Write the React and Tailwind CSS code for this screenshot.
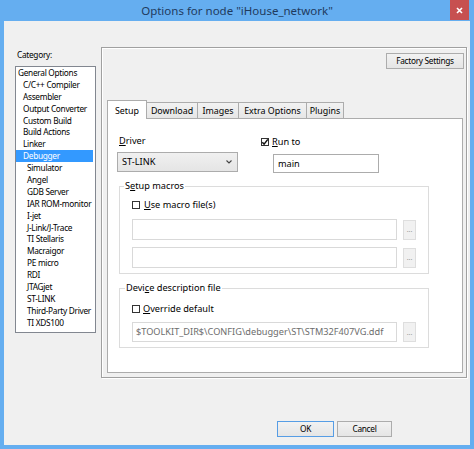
import React from "react";

function Check({ checked }) {
  return (
    <span className="relative flex h-[8px] w-[8px] shrink-0 items-center justify-center border border-[#333333] bg-white">
      {checked && (
        <svg width="8" height="8" viewBox="0 0 8 8" className="absolute left-[-1px] top-[-1px]">
          <path d="M1.3 4.2 L3.1 6.2 L6.8 1.4" stroke="#111" strokeWidth="1.5" fill="none" />
        </svg>
      )}
    </span>
  );
}

const items = [
  ["General Options", 0],
  ["C/C++ Compiler", 1],
  ["Assembler", 1],
  ["Output Converter", 1],
  ["Custom Build", 1],
  ["Build Actions", 1],
  ["Linker", 1],
  ["Debugger", 1, true],
  ["Simulator", 2],
  ["Angel", 2],
  ["GDB Server", 2],
  ["IAR ROM-monitor", 2],
  ["I-jet", 2],
  ["J-Link/J-Trace", 2],
  ["TI Stellaris", 2],
  ["Macraigor", 2],
  ["PE micro", 2],
  ["RDI", 2],
  ["JTAGjet", 2],
  ["ST-LINK", 2],
  ["Third-Party Driver", 2],
  ["TI XDS100", 2],
];

function Row({ label, level, selected }) {
  const pad = level === 0 ? "pl-[2px]" : level === 1 ? "pl-[7px]" : "pl-[11px]";
  return (
    <div
      className={
        "flex h-[11.9px] items-center whitespace-nowrap leading-[11.9px] " +
        pad +
        (selected ? " mr-[2px] bg-[#3399ff] text-white" : " text-black")
      }
    >
      {label}
    </div>
  );
}

function Dots() {
  return (
    <div className="flex h-[20px] w-[13px] items-center justify-center border border-[#dedede] bg-[#f1f1f1] text-[7px] leading-none text-[#9a9a9a]">
      ...
    </div>
  );
}

function Tab({ children, w, selected }) {
  return selected ? (
    <div className={"relative z-10 -mb-[1px] flex h-[19px] items-start justify-center border border-b-0 border-[#acacac] bg-white pt-[3px] " + w}>
      {children}
    </div>
  ) : (
    <div className={"-ml-[1px] flex h-[16px] items-center justify-center border border-b-0 border-[#acacac] bg-[#f0f0f0] bg-gradient-to-b from-[#f2f2f2] to-[#e6e6e6] " + w}>
      {children}
    </div>
  );
}

export default function App() {
  return (
    <div className="flex h-[449px] w-[474px] flex-col bg-[#65aef0] font-['Noto_Sans',sans-serif] text-[8.3px] tracking-[-0.3px] text-black">
      {/* title bar */}
      <div className="relative flex h-[21px] shrink-0 items-center justify-center">
        <span className="text-[11.5px] tracking-normal text-[#1f3b5e]">Options for node "iHouse_network"</span>
        <div className="absolute right-[5px] top-0 flex h-[20px] w-[19px] items-center justify-center bg-[#c75050]">
          <svg width="7" height="7" viewBox="0 0 7 7">
            <path d="M1 1 L6 6 M6 1 L1 6" stroke="#fff" strokeWidth="1.6" />
          </svg>
        </div>
      </div>

      {/* client */}
      <div className="mx-[4px] mb-[4px] flex flex-1 flex-col bg-[#f0f0f0]">
        <div className="flex items-start">
          {/* category column */}
          <div className="flex flex-col pl-[11px] pt-[28px]">
            <div className="ml-[2px] h-[12px] leading-[12px]">Category:</div>
            <div className="mt-[5px] h-[267px] w-[81px] border border-[#828790] bg-white pt-[0px]">
              {items.map(([l, lv, s]) => (
                <Row key={l} label={l} level={lv} selected={s} />
              ))}
            </div>
          </div>

          {/* main frame */}
          <div className="ml-[5px] mt-[26px] flex h-[331px] w-[366px] flex-col border border-[#a0a0a0] shadow-[inset_1px_1px_0_#ffffff,1px_1px_0_#ffffff]">
            <div className="mr-[2px] mt-[5px] flex justify-end">
              <div className="flex h-[16px] w-[78px] items-center justify-center border border-[#acacac] bg-gradient-to-b from-[#f2f2f2] to-[#e5e5e5]">
                Factory Settings
              </div>
            </div>

            <div className="ml-[5px] mt-[31px] flex flex-col">
              <div className="flex h-[18px] items-end text-[8.9px] tracking-normal">
                <Tab w="w-[40px]" selected>Setup</Tab>
                <Tab w="w-[52px]">Download</Tab>
                <Tab w="w-[42px]">Images</Tab>
                <Tab w="w-[69px]">Extra Options</Tab>
                <Tab w="w-[38px]">Plugins</Tab>
              </div>

              <div className="flex h-[255px] w-[356px] flex-col border border-[#acacac] bg-white text-[9.2px] tracking-normal">
                {/* driver / run to */}
                <div className="mt-[16px] flex items-start pl-[9px]">
                  <div className="flex flex-col">
                    <div className="ml-[2px] h-[12px] leading-[12px]">
                      <span className="underline">D</span>river
                    </div>
                    <div className="mt-[5px] flex h-[20px] w-[121px] items-center justify-between border border-[#acacac] bg-gradient-to-b from-[#f0f0f0] to-[#e5e5e5] pl-[4px] pr-[5px]">
                      <span>ST-LINK</span>
                      <svg width="6" height="4" viewBox="0 0 6 4">
                        <path d="M0.5 0.5 L3 3 L5.5 0.5" stroke="#444" strokeWidth="1.1" fill="none" />
                      </svg>
                    </div>
                  </div>
                  <div className="ml-[23px] mt-[1px] flex flex-col">
                    <div className="flex h-[12px] items-center gap-[3px]">
                      <Check checked />
                      <span>
                        <span className="underline">R</span>un to
                      </span>
                    </div>
                    <div className="ml-[12px] mt-[6px] flex h-[19px] w-[106px] items-center border border-[#acacac] bg-white pl-[4px]">
                      main
                    </div>
                  </div>
                </div>

                {/* setup macros */}
                <fieldset className="ml-[11px] mt-[7px] w-[310px] border border-[#dcdcdc] pb-[5px]">
                  <legend className="ml-[4px] h-[12px] px-[1px] leading-[12px]">
                    S<span className="underline">e</span>tup macros
                  </legend>
                  <div className="flex flex-col pl-[12px]">
                    <div className="mt-[7px] flex h-[12px] items-center gap-[4px]">
                      <Check />
                      <span>
                        <span className="underline">U</span>se macro file(s)
                      </span>
                    </div>
                    <div className="mt-[8px] flex items-center gap-[6px]">
                      <div className="h-[21px] w-[265px] border border-[#d9d9d9] bg-white" />
                      <Dots />
                    </div>
                    <div className="mt-[7px] flex items-center gap-[6px]">
                      <div className="h-[21px] w-[265px] border border-[#d9d9d9] bg-white" />
                      <Dots />
                    </div>
                  </div>
                </fieldset>

                {/* device description */}
                <fieldset className="ml-[11px] mt-[8px] w-[310px] border border-[#dcdcdc] pb-[5px]">
                  <legend className="ml-[5px] h-[12px] px-[1px] leading-[12px]">
                    Devi<span className="underline">c</span>e description file
                  </legend>
                  <div className="flex flex-col pl-[12px]">
                    <div className="mt-[9px] flex h-[12px] items-center gap-[3px]">
                      <Check />
                      <span>
                        <span className="underline">O</span>verride default
                      </span>
                    </div>
                    <div className="mt-[7px] flex items-center gap-[6px]">
                      <div className="flex h-[20px] w-[265px] items-center overflow-hidden whitespace-nowrap border border-[#d9d9d9] bg-white pl-[3px] text-[#6d6d6d]">
                        $TOOLKIT_DIR$\CONFIG\debugger\ST\STM32F407VG.ddf
                      </div>
                      <Dots />
                    </div>
                  </div>
                </fieldset>
              </div>
            </div>
          </div>
        </div>

        {/* buttons */}
        <div className="mt-[43px] flex justify-end gap-[3px] pr-[78px]">
          <div className="flex h-[16px] w-[57px] items-center justify-center border border-[#569de5] bg-gradient-to-b from-[#f2f2f2] to-[#e5e5e5]">
            OK
          </div>
          <div className="flex h-[16px] w-[55px] items-center justify-center border border-[#acacac] bg-gradient-to-b from-[#f2f2f2] to-[#e5e5e5]">
            Cancel
          </div>
        </div>
      </div>
    </div>
  );
}
